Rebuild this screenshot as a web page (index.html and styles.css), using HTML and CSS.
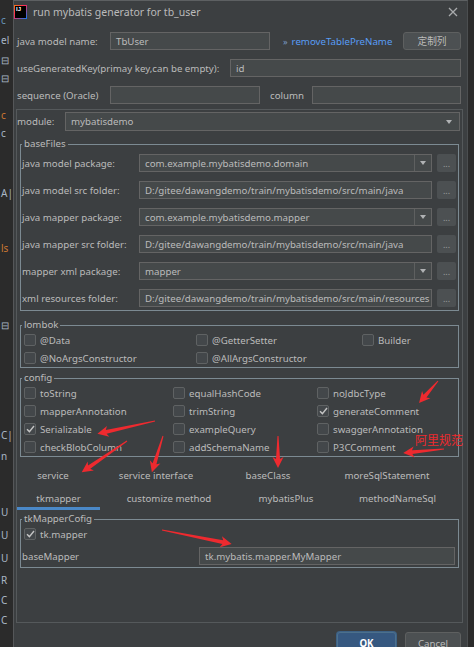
FILE: index.html
```html
<!DOCTYPE html>
<html>
<head>
<meta charset="utf-8">
<title>run mybatis generator for tb_user</title>
<link rel="stylesheet" href="styles.css">
</head>
<body>
<div class="screen">
  <div class="ide-strip">
    <span class="g s1 blue">c</span>
    <span class="g s2">el</span>
    <span class="g s3">⊟</span>
    <span class="g s4">⊟</span>
    <span class="g s5 orange">c</span>
    <span class="g s6">c</span>
    <span class="g s7">A|</span>
    <span class="g s8 orange">ls</span>
    <span class="g s9">⊟</span>
    <span class="g s10">C|</span>
    <span class="g s11">n</span>
    <span class="g s12">U</span>
    <span class="g s13">U</span>
    <span class="g s14">U</span>
    <span class="g s15">R</span>
    <span class="g s16">C</span>
    <span class="g s17">C</span>
  </div>
  <div class="dialog">
    <div class="titlebar">
      <div class="app-icon"><span class="ij">IJ</span></div>
      <span class="title">run mybatis generator for tb_user</span>
      <svg class="close" width="10" height="10" viewBox="0 0 10 10"><path d="M1 1 L9 9 M9 1 L1 9" stroke="#a9abad" stroke-width="1.3" fill="none"/></svg>
    </div>
    <div class="body">
      <div class="row">
        <span class="lbl lbl-name">java model name:</span>
        <div class="field f-name">TbUser</div>
        <span class="link"><span class="raquo">»</span>removeTablePreName</span>
        <div class="btn btn-col">定制列</div>
      </div>
      <div class="row">
        <span class="lbl lbl-key">useGeneratedKey(primay key,can be empty):</span>
        <div class="field grow">id</div>
      </div>
      <div class="row last">
        <span class="lbl lbl-name">sequence (Oracle)</span>
        <div class="field f-seq"></div>
        <span class="lbl lbl-col">column</span>
        <div class="field grow"></div>
      </div>

      <div class="panel">
        <div class="row module-row">
          <span class="lbl lbl-mod">module:</span>
          <div class="field combo grow"><span class="val">mybatisdemo</span><span class="arrow plain"><i class="tri"></i></span></div>
        </div>

        <fieldset class="group base">
          <legend>baseFiles</legend>
          <div class="frow">
            <span class="flbl">java model package:</span>
            <div class="field combo fwide"><span class="val">com.example.mybatisdemo.domain</span><span class="arrow"><i class="tri"></i></span></div>
            <div class="dots">...</div>
          </div>
          <div class="frow">
            <span class="flbl">java model src folder:</span>
            <div class="field fwide">D:/gitee/dawangdemo/train/mybatisdemo/src/main/java</div>
            <div class="dots">...</div>
          </div>
          <div class="frow">
            <span class="flbl">java mapper package:</span>
            <div class="field combo fwide"><span class="val">com.example.mybatisdemo.mapper</span><span class="arrow"><i class="tri"></i></span></div>
            <div class="dots">...</div>
          </div>
          <div class="frow">
            <span class="flbl">java mapper src folder:</span>
            <div class="field fwide">D:/gitee/dawangdemo/train/mybatisdemo/src/main/java</div>
            <div class="dots">...</div>
          </div>
          <div class="frow">
            <span class="flbl">mapper xml package:</span>
            <div class="field combo fwide"><span class="val">mapper</span><span class="arrow"><i class="tri"></i></span></div>
            <div class="dots">...</div>
          </div>
          <div class="frow">
            <span class="flbl">xml resources folder:</span>
            <div class="field fwide">D:/gitee/dawangdemo/train/mybatisdemo/src/main/resources</div>
            <div class="dots">...</div>
          </div>
        </fieldset>

        <fieldset class="group lombok">
          <legend>lombok</legend>
          <div class="grid grid-lombok">
            <div class="cell"><span class="cb"></span>@Data</div>
            <div class="cell"><span class="cb"></span>@GetterSetter</div>
            <div class="cell"><span class="cb"></span>Builder</div>
            <div class="cell"><span class="cb"></span>@NoArgsConstructor</div>
            <div class="cell"><span class="cb"></span>@AllArgsConstructor</div>
          </div>
        </fieldset>

        <fieldset class="group config">
          <legend>config</legend>
          <div class="grid grid-config">
            <div class="cell"><span class="cb"></span>toString</div>
            <div class="cell"><span class="cb"></span>equalHashCode</div>
            <div class="cell"><span class="cb"></span>noJdbcType</div>
            <div class="cell"><span class="cb"></span>mapperAnnotation</div>
            <div class="cell"><span class="cb"></span>trimString</div>
            <div class="cell"><span class="cb on"><svg width="9" height="8" viewBox="0 0 9 8"><path d="M1 4.2 L3.4 6.6 L8 1" stroke="#c4c4c4" stroke-width="1.4" fill="none"/></svg></span>generateComment</div>
            <div class="cell"><span class="cb on"><svg width="9" height="8" viewBox="0 0 9 8"><path d="M1 4.2 L3.4 6.6 L8 1" stroke="#c4c4c4" stroke-width="1.4" fill="none"/></svg></span>Serializable</div>
            <div class="cell"><span class="cb"></span>exampleQuery</div>
            <div class="cell"><span class="cb"></span>swaggerAnnotation</div>
            <div class="cell"><span class="cb"></span>checkBlobColumn</div>
            <div class="cell"><span class="cb"></span>addSchemaName</div>
            <div class="cell"><span class="cb"></span>P3CComment</div>
          </div>
        </fieldset>

        <div class="tabs">
          <div class="tabrow tabrow1">
            <span class="tab">service</span>
            <span class="tab">service interface</span>
            <span class="tab">baseClass</span>
            <span class="tab">moreSqlStatement</span>
          </div>
          <div class="tabrow tabrow2">
            <span class="tab sel">tkmapper</span>
            <span class="tab">customize method</span>
            <span class="tab">mybatisPlus</span>
            <span class="tab">methodNameSql</span>
          </div>
        </div>

        <fieldset class="group tk">
          <legend>tkMapperCofig</legend>
          <div class="cell tkrow"><span class="cb on"><svg width="9" height="8" viewBox="0 0 9 8"><path d="M1 4.2 L3.4 6.6 L8 1" stroke="#c4c4c4" stroke-width="1.4" fill="none"/></svg></span>tk.mapper</div>
          <div class="frow bm">
            <span class="bmlbl">baseMapper</span>
            <div class="field grow">tk.mybatis.mapper.MyMapper</div>
          </div>
        </fieldset>
      </div>

      <div class="footer">
        <div class="btn ok">OK</div>
        <div class="btn cancel">Cancel</div>
      </div>
    </div>
  </div>

  <svg class="marks" width="474" height="647" viewBox="0 0 474 647">
    <g fill="#ee2a2f">
      <path transform="translate(438,381) rotate(130.8)" d="M0,-0.5 L20,-2 L18,-5.5 L29,0 L18,5.5 L20,2 L0,0.5Z"/>
      <path transform="translate(155,421) rotate(167.4)" d="M0,-0.5 L50,-2 L48,-5.5 L59,0 L48,5.5 L50,2 L0,0.5Z"/>
      <path transform="translate(127,441) rotate(145.4)" d="M0,-0.5 L46,-2 L44,-5.5 L55,0 L44,5.5 L46,2 L0,0.5Z"/>
      <path transform="translate(163,436) rotate(107)" d="M0,-0.5 L29,-2 L27,-5.5 L38,0 L27,5.5 L29,2 L0,0.5Z"/>
      <path transform="translate(278,436) rotate(90)" d="M0,-0.5 L23,-2 L21,-5.5 L32,0 L21,5.5 L23,2 L0,0.5Z"/>
      <path transform="translate(444,449) rotate(174.4)" d="M0,-0.5 L32,-2 L30,-5.5 L41,0 L30,5.5 L32,2 L0,0.5Z"/>
      <path transform="translate(162,530) rotate(11.3)" d="M0,-0.5 L62,-2 L60,-5.5 L71,0 L60,5.5 L62,2 L0,0.5Z"/>
    </g>
  </svg>
  <span class="note">阿里规范</span>
</div>
</body>
</html>
```

FILE: styles.css
```css
* { box-sizing: border-box; }
html, body { margin: 0; padding: 0; }
body {
  width: 474px;
  height: 647px;
  overflow: hidden;
  background: #2b2b2b;
  font-family: "Noto Sans", "Noto Sans CJK SC", sans-serif;
  font-size: 9.7px;
  color: #bbbbbb;
}
.screen {
  position: relative;
  display: flex;
  align-items: flex-start;
  width: 474px;
  height: 647px;
  overflow: hidden;
}

/* background IDE sliver */
.ide-strip {
  width: 13px;
  height: 647px;
  flex: none;
  background: #2b2b2b;
  display: flex;
  flex-direction: column;
  overflow: hidden;
  font-size: 10px;
  line-height: 12px;
  color: #a9b7c6;
  white-space: nowrap;
}
.g { display: block; padding-left: 1px; flex: none; }
.blue { color: #6897bb; }
.orange { color: #cc7832; }
.s1 { margin-top: 14px; }
.s2 { margin-top: 8px; }
.s3 { margin-top: 8px; }
.s4 { margin-top: 6px; }
.s5 { margin-top: 25px; }
.s6 { margin-top: 6px; }
.s7 { margin-top: 48px; }
.s8 { margin-top: 43px; }
.s9 { margin-top: 65px; }
.s10 { margin-top: 98px; }
.s11 { margin-top: 9px; }
.s12 { margin-top: 44px; }
.s13 { margin-top: 11px; }
.s14 { margin-top: 11px; }
.s15 { margin-top: 10px; }
.s16 { margin-top: 8px; }
.s17 { margin-top: 8px; }

.dialog {
  width: 455px;
  flex: none;
  background: #3c3f41;
  border-left: 1px solid #555759;
  border-right: 1px solid #4b4e50;
  border-top: 1px solid #5d6062;
  display: flex;
  flex-direction: column;
}
.titlebar {
  height: 22px;
  flex: none;
  display: flex;
  align-items: center;
  padding-right: 9px;
}
.app-icon {
  width: 13px;
  height: 14px;
  background: linear-gradient(135deg, #f97a12 0%, #fe2857 40%, #087cfa 100%);
  padding: 1px;
  flex: none;
}
.ij {
  display: block;
  width: 100%;
  height: 100%;
  background: #000;
  color: #fff;
  font-family: "Liberation Sans", sans-serif;
  font-weight: bold;
  font-size: 6px;
  line-height: 7px;
  padding-left: 1px;
}
.title {
  margin-left: 6px;
  font-size: 10.5px;
  color: #bbbbbb;
}
.close { margin-left: auto; }

.body {
  flex: none;
  padding: 9px 4px 0 2px;
}
.row {
  display: flex;
  align-items: center;
  height: 18px;
  margin-bottom: 9px;
  padding: 0 2px 0 1px;
  white-space: nowrap;
}
.row.last { margin-bottom: 5px; }
.lbl { flex: none; }
.lbl-name { width: 93px; }
.lbl-key { width: 213px; }
.lbl-col { width: 42px; margin-left: 10px; }
.lbl-mod { width: 48px; }

.field {
  height: 18px;
  background: #45494a;
  border: 1px solid #646464;
  padding: 0 5px;
  display: flex;
  align-items: center;
  white-space: nowrap;
  overflow: hidden;
  color: #bbbbbb;
  flex: none;
}
.grow { flex: 1 1 auto; }
.f-name { width: 160px; }
.f-seq { width: 150px; }
.link {
  margin-left: 13px;
  color: #589df6;
  display: flex;
  align-items: center;
}
.raquo { color: #7a9cc6; margin-right: 4px; font-size: 9px; }
.btn {
  display: flex;
  align-items: center;
  justify-content: center;
  background: #4c5052;
  border: 1px solid #5e6060;
  border-radius: 3px;
  color: #bbbbbb;
  flex: none;
}
.btn-col { margin-left: auto; width: 58px; height: 18px; }

.combo { padding-right: 0; }
.combo .val { flex: 1 1 auto; overflow: hidden; }
.arrow {
  width: 17px;
  height: 100%;
  border-left: 1px solid #5e6060;
  display: flex;
  align-items: center;
  justify-content: center;
  flex: none;
}
.arrow.plain { border-left: none; width: 20px; }
.tri {
  width: 0;
  height: 0;
  border-left: 3.5px solid transparent;
  border-right: 3.5px solid transparent;
  border-top: 4px solid #b0b2b4;
}

.panel {
  height: 514px;
  border: 1px solid #55595b;
  padding: 2px 1px 0 0;
}
.module-row {
  height: 19px;
  margin: 0 1px 0 0;
  padding: 0;
}
.module-row .field { height: 19px; }

.group {
  border: 1px solid #7c8a92;
  margin: 0 2px 0 3px;
  min-width: 0;
}
.group legend {
  padding: 0 2px;
  line-height: 12px;
  font-size: 9.7px;
  color: #bbbbbb;
}
.base { margin-top: 7px; padding: 4px 3px 3px 1px; }
.lombok { margin-top: 8px; padding: 0 3px 0 1px; }
.config { margin-top: 4px; padding: 0 3px 0 1px; }
.tk { margin-top: 3px; padding: 0 3px 2px 1px; }

.frow {
  display: flex;
  align-items: center;
  height: 18px;
  white-space: nowrap;
}
.frow + .frow { margin-top: 9px; }
.flbl { width: 117px; flex: none; }
.fwide { width: 293px; }
.dots {
  width: 19px;
  height: 18px;
  margin-left: 5px;
  background: #4c5052;
  border-radius: 2px;
  color: #9a9c9e;
  font-size: 9px;
  display: flex;
  align-items: center;
  justify-content: center;
  flex: none;
}

.grid {
  display: grid;
  grid-auto-rows: 18px;
  padding-left: 2px;
}
.grid-lombok { grid-template-columns: 172px 166px 1fr; }
.grid-config { grid-template-columns: 149px 144px 1fr; }
.cell {
  display: flex;
  align-items: center;
  gap: 4px;
  white-space: nowrap;
}
.cb {
  width: 12px;
  height: 12px;
  border: 1px solid #5f6263;
  background: #43474a;
  border-radius: 2px;
  flex: none;
  display: flex;
  align-items: center;
  justify-content: center;
}

.tabs { margin-top: 7px; }
.tabrow {
  display: grid;
  height: 23px;
}
.tabrow1 { grid-template-columns: 72px 134px 90px 1fr; }
.tabrow2 { grid-template-columns: 83px 138px 96px 1fr; }
.tab {
  display: flex;
  align-items: center;
  justify-content: center;
  white-space: nowrap;
  color: #bbbbbb;
}
.tab.sel { border-bottom: 3px solid #4a88c7; padding-top: 3px; }

.tkrow { height: 18px; padding-left: 2px; }
.bm { margin-top: 4px; }
.bmlbl { width: 177px; flex: none; }

.footer {
  display: flex;
  justify-content: flex-end;
  gap: 9px;
  margin-top: 9px;
  padding-right: 2px;
}
.ok {
  width: 59px;
  height: 22px;
  background: #365880;
  border-color: #4c708c;
  color: #ffffff;
  font-weight: bold;
  box-shadow: 0 0 0 1px #3d6185;
}
.cancel { width: 56px; height: 22px; }

.marks {
  position: absolute;
  left: 0;
  top: 0;
  pointer-events: none;
}
.note {
  position: absolute;
  left: 415px;
  top: 433px;
  color: #ee2a2f;
  font-family: "Noto Sans CJK SC", sans-serif;
  font-size: 12px;
  line-height: 14px;
}
```
